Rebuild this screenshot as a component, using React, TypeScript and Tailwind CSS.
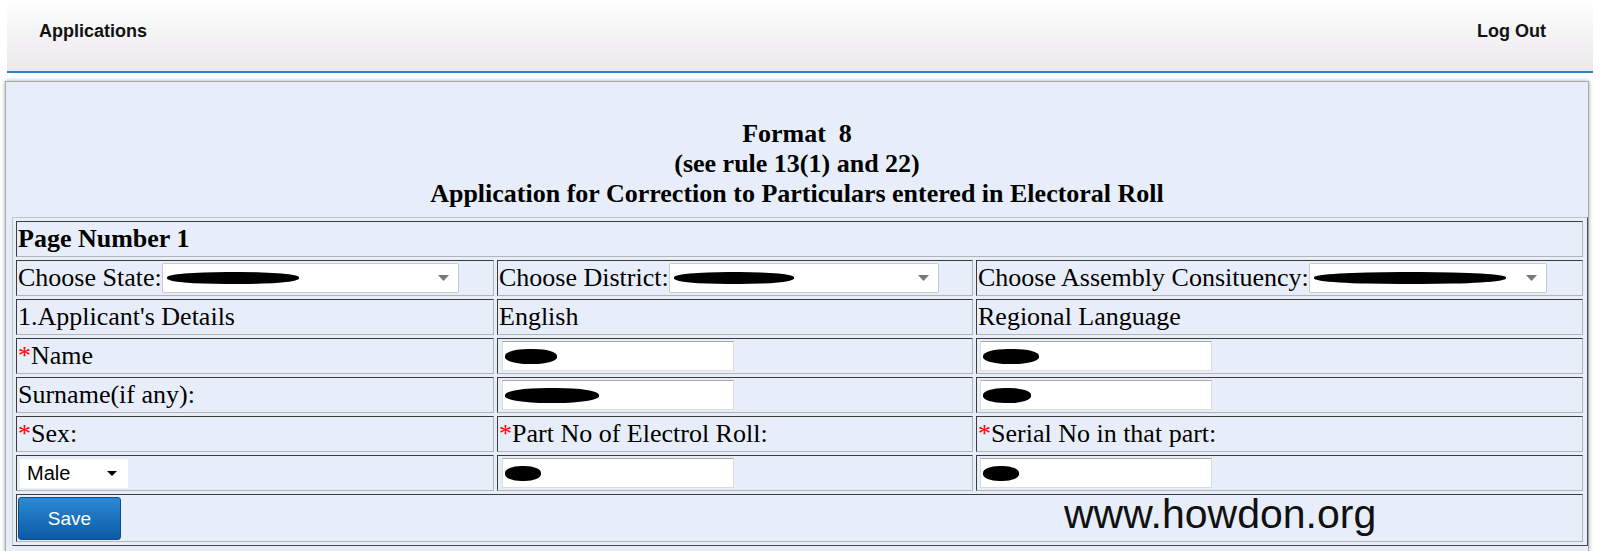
import React from 'react';

const serif = { fontFamily: '"Liberation Serif", "Times New Roman", serif' };
const sans = { fontFamily: '"Liberation Sans", Arial, sans-serif' };

const cell =
  'flex items-center border border-t-[#3c3c3c] border-l-[#3c3c3c] border-b-[#b4b4b4] border-r-[#b4b4b4] bg-[#e8eef9] pl-[1px] h-[36px]';

function Blob({ w, h = 13, className = '' }: { w: number; h?: number; className?: string }) {
  return (
    <span
      className={'inline-block rounded-[45%] bg-black blur-[0.6px] ' + className}
      style={{ width: w, height: h }}
    />
  );
}

function Req() {
  return <span className="text-[#ff0000]">*</span>;
}

function FakeSelect({ width, blob }: { width: number; blob: number }) {
  return (
    <div
      className="flex h-[30px] items-center justify-between rounded-[2px] border border-[#c9c9c9] bg-white pl-[4px] pr-[9px]"
      style={{ width }}
    >
      <Blob w={blob} h={12} />
      <svg width="11" height="6" viewBox="0 0 11 6">
        <path d="M0 0h11L5.5 6z" fill="#777" />
      </svg>
    </div>
  );
}

function TextBox({ blob, className = '' }: { blob: number; className?: string }) {
  return (
    <div
      className={
        'flex h-[30px] w-[232px] items-center border border-[#dcdcdc] border-t-[#a9a9a9] bg-white pl-[2px] ' + className
      }
    >
      <Blob w={blob} h={15} />
    </div>
  );
}

export default function App() {
  return (
    <div className="min-h-[551px] bg-white text-black" style={serif}>
      <header
        className="ml-[7px] flex h-[71px] w-[1586px] items-start justify-between bg-linear-to-b from-[#fefefe] to-[#ebe8eb] pl-[32px] pr-[47px] pt-[20px] text-[18px] font-bold leading-[22px] text-[#111]"
        style={sans}
      >
        <span>Applications</span>
        <span>Log Out</span>
      </header>
      <div className="ml-[7px] h-[2px] w-[1586px] bg-[#2b7fd3]" />

      <div className="ml-[5px] mt-[8px] w-[1584px] border border-[#a9a9a9] bg-[#e8eef9] pb-[20px] pt-[37px] shadow-[0_0_4px_rgba(0,0,0,0.35)]">
        <div className="text-center text-[26px] font-bold leading-[30px]">
          <div>Format&nbsp; 8</div>
          <div>(see rule 13(1) and 22)</div>
          <div>Application for Correction to Particulars entered in Electoral Roll</div>
        </div>

        <div className="ml-[6px] mt-[8px] grid w-[1576px] grid-cols-[478px_476px_607px] gap-[3px] border border-t-[#c4c4c4] border-l-[#c4c4c4] border-b-[#4a4a4a] border-r-[#4a4a4a] p-[3px] text-[26px] leading-[30px]">
          <div className={cell + ' col-span-3 font-bold'}>Page Number 1</div>

          <div className={cell}>
            <span>Choose State:</span>
            <FakeSelect width={297} blob={132} />
          </div>
          <div className={cell}>
            <span>Choose District:</span>
            <FakeSelect width={270} blob={120} />
          </div>
          <div className={cell}>
            <span>Choose Assembly Consituency:</span>
            <FakeSelect width={238} blob={192} />
          </div>

          <div className={cell}>1.Applicant's Details</div>
          <div className={cell}>English</div>
          <div className={cell}>Regional Language</div>

          <div className={cell}>
            <Req />
            Name
          </div>
          <div className={cell}>
            <TextBox blob={52} className="ml-[3px]" />
          </div>
          <div className={cell}>
            <TextBox blob={56} className="ml-[2px]" />
          </div>

          <div className={cell}>Surname(if any):</div>
          <div className={cell}>
            <TextBox blob={94} className="ml-[3px]" />
          </div>
          <div className={cell}>
            <TextBox blob={48} className="ml-[2px]" />
          </div>

          <div className={cell}>
            <Req />
            Sex:
          </div>
          <div className={cell}>
            <Req />
            Part No of Electrol Roll:
          </div>
          <div className={cell}>
            <Req />
            Serial No in that part:
          </div>

          <div className={cell}>
            <div
              className="ml-[2px] flex h-[29px] w-[108px] items-center justify-between rounded-[2px] bg-white pl-[7px] pr-[11px] text-[20px] leading-[22px]"
              style={sans}
            >
              <span>Male</span>
              <svg width="10" height="5" viewBox="0 0 10 5">
                <path d="M0 0h10L5 5z" fill="#000" />
              </svg>
            </div>
          </div>
          <div className={cell}>
            <TextBox blob={36} className="ml-[3px]" />
          </div>
          <div className={cell}>
            <TextBox blob={36} className="ml-[2px]" />
          </div>

          <div className={cell + ' col-span-3 h-[48px] items-start pt-[2px]'}>
            <button
              className="h-[43px] w-[103px] rounded-[3px] border border-[#0b4f92] bg-linear-to-b from-[#2c8ad4] to-[#0a5aa5] text-[19px] text-white"
              style={sans}
            >
              Save
            </button>
            <span className="ml-[943px] mt-[-7px] text-[41px] leading-[48px] text-[#111]" style={sans}>
              www.howdon.org
            </span>
          </div>
        </div>
      </div>
    </div>
  );
}
